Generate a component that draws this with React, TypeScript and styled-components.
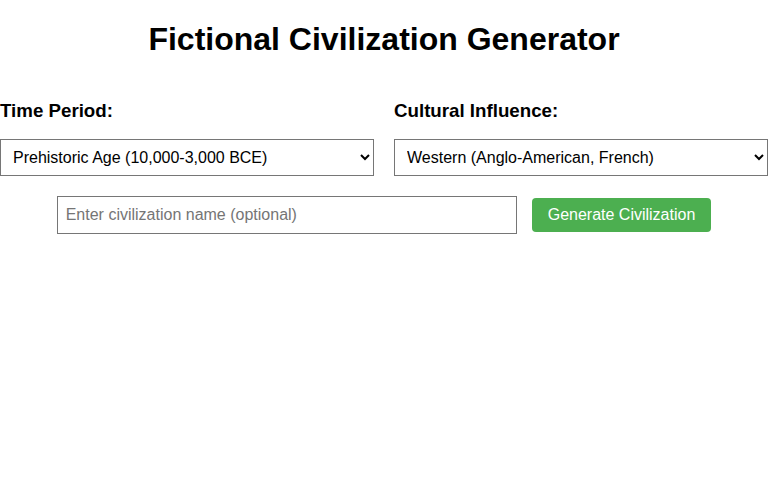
import * as React from 'react'
import styled, { createGlobalStyle } from 'styled-components'

const GlobalStyle = createGlobalStyle`
  body {
    margin: 0;
    background: #fff;
    font-family: "Liberation Sans", Arial, sans-serif;
    color: #000;
  }
`

const Page = styled.div`
  width: 768px;
`

const Title = styled.h1`
  font-size: 32px;
  font-weight: bold;
  text-align: center;
  margin: 21.44px 0;
`

const Options = styled.div`
  display: grid;
  grid-template-columns: 1fr 1fr;
  column-gap: 20px;
  padding-top: 20px;
`

const Field = styled.div`
  display: flex;
  flex-direction: column;
`

const Label = styled.label`
  display: block;
  font-size: 18.72px;
  font-weight: bold;
  line-height: 21.5px;
  margin-bottom: 18px;
`

const Select = styled.select`
  width: 100%;
  height: 37px;
  box-sizing: border-box;
  padding: 0 8px;
  font-family: "Liberation Sans", Arial, sans-serif;
  font-size: 16px;
  color: #000;
  background: #fff;
  border: 1px solid #767676;
  border-radius: 0;
`

const NameRow = styled.div`
  display: flex;
  justify-content: center;
  align-items: center;
  gap: 15px;
  margin-top: 20px;
`

const NameInput = styled.input`
  width: 460px;
  height: 38px;
  box-sizing: border-box;
  padding: 0 2px 0 8px;
  font-family: "Liberation Sans", Arial, sans-serif;
  font-size: 16px;
  border: 1px solid #767676;
  border-radius: 0;

  &::placeholder {
    color: #757575;
  }
`

const GenerateButton = styled.button`
  height: 34px;
  padding: 0 16px;
  font-family: "Liberation Sans", Arial, sans-serif;
  font-size: 16px;
  color: #fff;
  background: #4caf50;
  border: none;
  border-radius: 4px;
  cursor: pointer;
`

export default function App() {
  const [period, setPeriod] = React.useState('prehistoric')
  const [culture, setCulture] = React.useState('western')
  const [name, setName] = React.useState('')

  return (
    <Page>
      <GlobalStyle />
      <Title>Fictional Civilization Generator</Title>
      <Options>
        <Field>
          <Label htmlFor="period">Time Period:</Label>
          <Select id="period" value={ period } onChange={ e => setPeriod(e.target.value) }>
            <option value="prehistoric">Prehistoric Age (10,000-3,000 BCE)</option>
            <option value="ancient">Ancient Era (3,000 BCE-500 CE)</option>
            <option value="medieval">Medieval Period (500-1500 CE)</option>
            <option value="modern">Modern Era (1500 CE-Present)</option>
          </Select>
        </Field>
        <Field>
          <Label htmlFor="culture">Cultural Influence:</Label>
          <Select id="culture" value={ culture } onChange={ e => setCulture(e.target.value) }>
            <option value="western">Western (Anglo-American, French)</option>
            <option value="eastern">Eastern (Chinese, Japanese)</option>
            <option value="african">African</option>
            <option value="indigenous">Indigenous</option>
          </Select>
        </Field>
      </Options>
      <NameRow>
        <NameInput
          type="text"
          placeholder="Enter civilization name (optional)"
          value={ name }
          onChange={ e => setName(e.target.value) }
        />
        <GenerateButton>Generate Civilization</GenerateButton>
      </NameRow>
    </Page>
  )
}
